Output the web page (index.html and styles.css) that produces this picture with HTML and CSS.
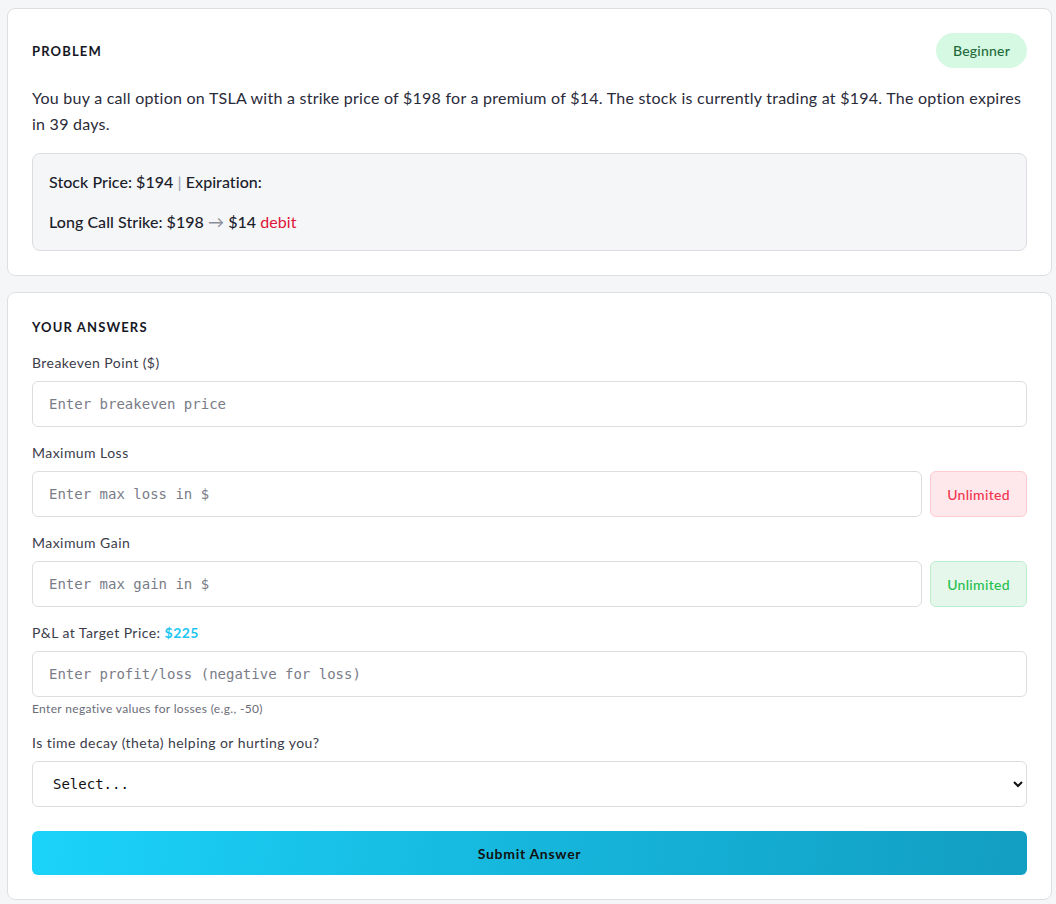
FILE: index.html
```html
<!DOCTYPE html>
<html lang="en">
<head>
<meta charset="utf-8">
<title>Options Problem</title>
<link rel="stylesheet" href="styles.css">
</head>
<body>
<div class="page">
  <section class="card">
    <div class="card-head">
      <h2 class="section-title">PROBLEM</h2>
      <span class="badge">Beginner</span>
    </div>
    <p class="problem-text">You buy a call option on TSLA with a strike price of $198 for a premium of $14. The stock is currently trading at $194. The option expires in 39 days.</p>
    <div class="info-box">
      <div class="info-line">Stock Price: $194 <span class="sep">|</span> Expiration:</div>
      <div class="info-line">Long Call Strike: $198 <span class="arrow">→</span> $14 <span class="debit">debit</span></div>
    </div>
  </section>

  <section class="card">
    <h2 class="section-title answers-title">YOUR ANSWERS</h2>

    <div class="field">
      <label class="label">Breakeven Point ($)</label>
      <input class="input" type="text" placeholder="Enter breakeven price">
    </div>

    <div class="field">
      <label class="label">Maximum Loss</label>
      <div class="row">
        <input class="input" type="text" placeholder="Enter max loss in $">
        <button class="pill pill-red" type="button">Unlimited</button>
      </div>
    </div>

    <div class="field">
      <label class="label">Maximum Gain</label>
      <div class="row">
        <input class="input" type="text" placeholder="Enter max gain in $">
        <button class="pill pill-green" type="button">Unlimited</button>
      </div>
    </div>

    <div class="field">
      <label class="label">P&amp;L at Target Price: <span class="target">$225</span></label>
      <input class="input" type="text" placeholder="Enter profit/loss (negative for loss)">
      <div class="hint">Enter negative values for losses (e.g., -50)</div>
    </div>

    <div class="field">
      <label class="label">Is time decay (theta) helping or hurting you?</label>
      <select class="input select">
        <option>Select...</option>
        <option>Helping</option>
        <option>Hurting</option>
      </select>
    </div>

    <button class="submit" type="button">Submit Answer</button>
  </section>
</div>
</body>
</html>
```

FILE: styles.css
```css
* { box-sizing: border-box; }

html, body {
  margin: 0;
  padding: 0;
  background: #f5f6f8;
}

body {
  font-family: Lato, "Liberation Sans", Arial, sans-serif;
  color: #1c1d2b;
}

.page {
  padding: 8px 4px 4px 7px;
  display: flex;
  flex-direction: column;
  gap: 16px;
}

.card {
  background: #ffffff;
  border: 1px solid #dedfe2;
  border-radius: 8px;
  padding: 24px;
}

.card-head {
  display: flex;
  align-items: center;
  justify-content: space-between;
  height: 35px;
}

.section-title {
  margin: 0;
  font-size: 13px;
  font-weight: 700;
  letter-spacing: 1.15px;
  color: #161725;
  line-height: 20px;
}

.badge {
  background: #d6f9e3;
  color: #1f6b3a;
  font-size: 14px;
  font-weight: 500;
  letter-spacing: 0.2px;
  height: 35px;
  line-height: 35px;
  padding: 0 17px;
  border-radius: 18px;
}

.problem-text {
  margin: 17px 0 0 0;
  font-size: 16px;
  line-height: 26px;
  letter-spacing: 0.25px;
  color: #2a2b3a;
}

.info-box {
  margin-top: 16px;
  background: #f5f6f8;
  border: 1px solid #dcdde0;
  border-radius: 8px;
  padding: 16px;
  display: flex;
  flex-direction: column;
  gap: 16px;
}

.info-line {
  font-size: 16px;
  line-height: 24px;
  font-weight: 500;
  letter-spacing: 0.05px;
  color: #1c1d2b;
}

.sep { color: #9ca3af; }
.arrow { color: #8a8f99; }
.debit { color: #e0133a; font-weight: 400; }

.answers-title {
  margin-bottom: 16px;
}

.field {
  margin-bottom: 16px;
}

.label {
  display: block;
  font-size: 14px;
  line-height: 20px;
  letter-spacing: 0.45px;
  color: #3b3c4a;
  margin-bottom: 8px;
}

.target {
  color: #1cc6f2;
  font-weight: 700;
}

.row {
  display: flex;
  gap: 8px;
}

.input {
  display: block;
  width: 100%;
  height: 46px;
  border: 1px solid #dcdde0;
  border-radius: 6px;
  background: #ffffff;
  padding: 0 16px;
  font-family: "DejaVu Sans Mono", "Liberation Mono", monospace;
  font-size: 14px;
  color: #1c1d2b;
}

.input::placeholder {
  color: #7a7c88;
}

.row .input {
  flex: 1;
}

.select {
  padding: 0 12px 0 16px;
  color: #111;
}

.pill {
  flex: 0 0 97px;
  height: 46px;
  border-radius: 6px;
  font-family: Lato, "Liberation Sans", Arial, sans-serif;
  font-size: 14px;
  font-weight: 500;
  letter-spacing: 0.3px;
  cursor: pointer;
}

.pill-red {
  background: #ffe8eb;
  border: 1px solid #fecbd2;
  color: #f0344f;
}

.pill-green {
  background: #e5f7eb;
  border: 1px solid #bdeccb;
  color: #1fbf4f;
}

.hint {
  margin-top: 4px;
  font-size: 12px;
  line-height: 16px;
  letter-spacing: 0.34px;
  color: #6b6d78;
}

.submit {
  display: block;
  width: 100%;
  height: 44px;
  margin-top: 24px;
  border: none;
  border-radius: 6px;
  background: linear-gradient(100deg, #1bd3fa 0%, #16b6dc 50%, #129ec2 100%);
  color: #111;
  font-family: Lato, "Liberation Sans", Arial, sans-serif;
  font-size: 14px;
  font-weight: 700;
  letter-spacing: 0.7px;
  cursor: pointer;
}
```
